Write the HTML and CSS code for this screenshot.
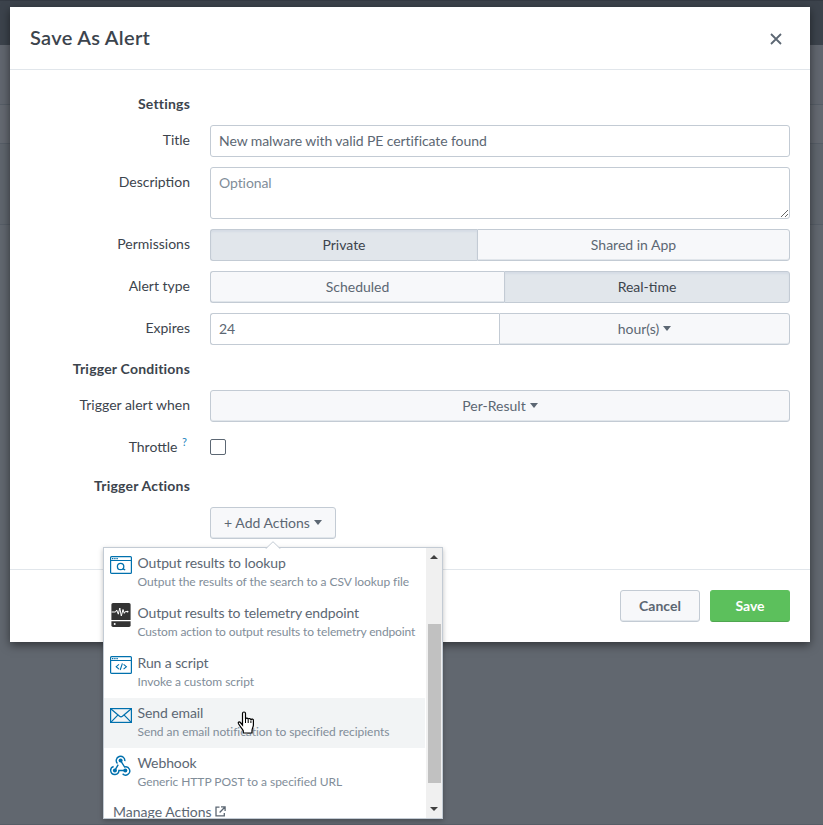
FILE: index.html
```html
<!DOCTYPE html>
<html lang="en">
<head>
  <meta charset="UTF-8">
  <title>Save As Alert</title>
  <link rel="stylesheet" href="styles.css">
</head>
<body>
  <div class="page-behind">
    <div class="nav-strip"></div>
    <div class="strip strip-title"></div>
    <div class="strip strip-search"></div>
    <div class="strip strip-tabs"></div>
    <div class="strip strip-rest"></div>
  </div>

  <div class="modal">
    <div class="modal-header">
      <h1>Save As Alert</h1>
      <button class="close" aria-label="Close">
        <svg width="12" height="12" viewBox="0 0 12 12"><path d="M1 1l10 10M11 1L1 11" stroke="#5c6773" stroke-width="1.8" fill="none"/></svg>
      </button>
    </div>

    <form class="modal-body">
      <h2>Settings</h2>
      <div class="row">
        <label>Title</label>
        <input class="control" type="text" value="New malware with valid PE certificate found">
      </div>
      <div class="row">
        <label>Description</label>
        <textarea class="control" placeholder="Optional"></textarea>
      </div>
      <div class="row">
        <label>Permissions</label>
        <div class="group permissions">
          <button type="button" class="btn active">Private</button>
          <button type="button" class="btn">Shared in App</button>
        </div>
      </div>
      <div class="row">
        <label>Alert type</label>
        <div class="group alert-type">
          <button type="button" class="btn">Scheduled</button>
          <button type="button" class="btn active">Real-time</button>
        </div>
      </div>
      <div class="row">
        <label>Expires</label>
        <div class="group expires">
          <input class="control" type="text" value="24">
          <button type="button" class="btn">hour(s)<span class="caret"></span></button>
        </div>
      </div>

      <h2>Trigger Conditions</h2>
      <div class="row">
        <label>Trigger alert when</label>
        <button type="button" class="btn">Per-Result<span class="caret"></span></button>
      </div>
      <div class="row">
        <label>Throttle <sup>?</sup></label>
        <span class="checkbox"></span>
      </div>

      <h2 class="actions-title">Trigger Actions</h2>
      <div class="row">
        <span></span>
        <div class="add-actions">
          <button type="button" class="btn">+ Add Actions<span class="caret"></span></button>
        </div>
      </div>
    </form>

    <div class="modal-footer">
      <button class="btn cancel">Cancel</button>
      <button class="btn save">Save</button>
    </div>
  </div>

  <div class="menu">
    <svg class="menu-arrow" width="16" height="8" viewBox="0 0 16 8"><path d="M0.5 8L8 0.7L15.5 8" fill="#fff" stroke="#c3cbd4"/></svg>
    <div class="menu-list">
      <div class="item">
        <svg width="22" height="22" viewBox="0 0 22 22" fill="none" stroke="#0070ad">
          <rect x=".6" y="3.6" width="20.8" height="16.8" rx="1" stroke-width="1.2"/>
          <path d="M1 7.500h20" stroke-width="1"/>
          <path d="M2 5.600h6" stroke-width="1.200" stroke-dasharray="1.400 .8"/>
          <circle cx="10.600" cy="13.500" r="3.200" stroke-width="1.300"/>
          <path d="M12.700 15.700l2.500 1.300" stroke-width="1.400"/>
        </svg>
        <div>
          <div class="name">Output results to lookup</div>
          <div class="desc">Output the results of the search to a CSV lookup file</div>
        </div>
      </div>
      <div class="item telemetry">
        <svg width="22" height="26" viewBox="0 0 22 26">
          <path d="M3 0h16a1.6 1.6 0 0 1 1.6 1.6V17H1.4V1.6A1.6 1.6 0 0 1 3 0z" fill="#333"/>
          <path d="M1.4 18.3h19.2v4a1.6 1.6 0 0 1-1.6 1.6H3a1.6 1.6 0 0 1-1.6-1.6z" fill="#333"/>
          <path d="M1.5 9h4l1.2-2 1.6 4.2L9.8 5l1.5 8 1.7-6.5 1.3 3.8 1-1.7H18" fill="none" stroke="#fff" stroke-width="1"/>
          <circle cx="17.6" cy="8.6" r=".9" fill="#fff"/>
          <circle cx="4.7" cy="21" r="1" fill="#fff"/>
        </svg>
        <div>
          <div class="name">Output results to telemetry endpoint</div>
          <div class="desc">Custom action to output results to telemetry endpoint</div>
        </div>
      </div>
      <div class="item">
        <svg width="22" height="22" viewBox="0 0 22 22" fill="none" stroke="#0070ad">
          <rect x=".6" y="3.6" width="20.8" height="16.8" rx="1" stroke-width="1.2"/>
          <path d="M1 7.500h20" stroke-width="1"/>
          <path d="M2 5.600h6" stroke-width="1.200" stroke-dasharray="1.400 .8"/>
          <path d="M9 11.300l-2.800 2.400L9 16.100M13.600 11.300l2.800 2.400-2.800 2.400M12.400 10.400l-2.200 6.600" stroke-width="1.100"/>
        </svg>
        <div>
          <div class="name">Run a script</div>
          <div class="desc">Invoke a custom script</div>
        </div>
      </div>
      <div class="item hover">
        <svg width="22" height="22" viewBox="0 0 22 22" fill="none" stroke="#0070ad">
          <rect x=".6" y="5.600" width="20.800" height="13.800" stroke-width="1.200"/>
          <path d="M1 6l8.600 7.300q1.400 1 2.800 0L21 6M1 19.200l6.800-7M21 19.200l-6.800-7" stroke-width="1.200"/>
        </svg>
        <div>
          <div class="name">Send email</div>
          <div class="desc">Send an email notification to specified recipients</div>
        </div>
      </div>
      <div class="item">
        <svg width="22" height="24" viewBox="0 -1 22 24" fill="none" stroke="#0070ad" stroke-width="1.4">
          <circle cx="10.6" cy="6.6" r="2" fill="#0070ad" stroke="none"/>
          <circle cx="4.9" cy="16.4" r="2" fill="#0070ad" stroke="none"/>
          <circle cx="15.3" cy="16.4" r="2" fill="#0070ad" stroke="none"/>
          <path d="M7.5 9.6a4.3 4.3 0 1 1 7.3-2.4M10.6 6.6l4 6.4a4.1 4.1 0 1 1-2 6.700"/>
          <path d="M3.6 12.5a4.1 4.1 0 1 0 5.3 4h6.4M4.9 16.4l3.3-5.8"/>
        </svg>
        <div>
          <div class="name">Webhook</div>
          <div class="desc">Generic HTTP POST to a specified URL</div>
        </div>
      </div>
      <div class="manage">Manage Actions
        <svg width="11" height="11" viewBox="0 0 11 11" fill="none" stroke="#5c6773" stroke-width="1.3"><path d="M4.5 1.2H1v8.6h8.3V7M6 .9h4.1V5M10 1L4.6 6.5"/></svg>
      </div>
    </div>
    <div class="scrollbar">
      <span class="up"></span>
      <span class="thumb"></span>
      <span class="down"></span>
    </div>
  </div>

  <svg class="cursor" width="18" height="24" viewBox="0 0 18 24">
    <path d="M5.5 14V2.5a1.5 1.5 0 0 1 3 0V8a1.4 1.4 0 0 1 2.7.4 1.4 1.4 0 0 1 2.7.6 1.3 1.3 0 0 1 2.5.8V14c0 2-1.4 3.5-1.4 5.500V22H6.300v-2.200C5 17.500 3.500 16 1.500 12.800c-.9-1.600.8-2.400 1.900-1.300z" fill="#fff" stroke="#000" stroke-width="1.2"/>
    <path d="M8.500 8v4M11.200 8.500V12M13.900 9.500V12" stroke="#000"/>
  </svg>
</body>
</html>
```

FILE: styles.css
```css
* {
  box-sizing: border-box;
}
body {
  margin: 0;
  height: 825px;
  position: relative;
  overflow: hidden;
  background: #61666f;
  font-family: Lato, "Liberation Sans", sans-serif;
  font-size: 14px;
  line-height: 20px;
  color: #3c444d;
}
button, input, textarea {
  font: inherit;
  letter-spacing: inherit;
  margin: 0;
}

/* dimmed page under the dialog */
.page-behind {
  position: absolute;
  inset: 0;
}
.nav-strip {
  height: 45px;
  background: #3c434c;
  border-top: 1px solid #343a43;
}
.strip {
  border-bottom: 1px solid #565d66;
  background: #61666f;
}
.strip-title { height: 60px; }
.strip-search { height: 39px; background: #646971; }
.strip-tabs { height: 81px; background: #5f656d; }
.strip-rest { height: 600px; background: #61676f; }

/* dialog */
.modal {
  position: relative;
  width: 800px;
  height: 635px;
  margin: 7px 0 0 10px;
  background: #fff;
  box-shadow: 0 3px 9px rgba(0, 0, 0, 0.5);
}
.modal-header {
  display: flex;
  justify-content: space-between;
  height: 63px;
  padding: 19px 28px 0 20px;
  border-bottom: 1px solid #e1e6eb;
}
h1 {
  margin: 0;
  font-size: 20px;
  line-height: 22px;
  font-weight: 600;
  letter-spacing: 0.3px;
}
.close {
  height: 12px;
  margin-top: 7px;
  padding: 0;
  border: 0;
  background: none;
  line-height: 0;
}
.modal-body {
  height: 499px;
  padding: 20px 20px 0;
}
h2 {
  width: 160px;
  margin: 14px 0 11px;
  font-size: 14px;
  line-height: 20px;
  font-weight: bold;
  letter-spacing: 0.2px;
  text-align: right;
}
h2:first-child {
  margin-top: 4px;
}
h2.actions-title {
  margin-top: 12px;
}
.row {
  display: grid;
  grid-template-columns: 160px 580px;
  column-gap: 20px;
  margin-bottom: 10px;
}
label {
  padding-top: 5px;
  text-align: right;
}
sup {
  margin: 0 3px 0 1px;
  font-size: 11px;
  line-height: 0;
  color: #1a84bd;
}
.control {
  width: 100%;
  height: 32px;
  padding: 4px 8px 6px;
  border: 1px solid #c3cbd4;
  border-radius: 3px;
  background: #fff;
  color: #5c6773;
  letter-spacing: -0.08px;
  outline: 0;
}
textarea.control {
  display: block;
  height: 52px;
  padding-top: 5px;
  resize: vertical;
}
.control::placeholder {
  color: #818d99;
}
.btn {
  display: flex;
  align-items: center;
  justify-content: center;
  height: 32px;
  padding: 0 14px 1px;
  border: 1px solid #c3cbd4;
  border-radius: 3px;
  background: #f7f8fa;
  box-shadow: inset 0 -1px 0 #e1e6eb;
  color: #5c6773;
}
.btn.active {
  background: #e1e6eb;
  box-shadow: inset 0 2px 2px #d5dce5;
  color: #3c444d;
}
.group {
  display: grid;
}
.group > :first-child {
  border-right: 0;
  border-radius: 3px 0 0 3px;
}
.group > :last-child {
  border-radius: 0 3px 3px 0;
}
.permissions { grid-template-columns: 267px 1fr; }
.alert-type { grid-template-columns: 294px 1fr; }
.expires { grid-template-columns: 289px 1fr; }
.caret {
  margin-left: 4px;
  border: 4px solid transparent;
  border-top: 5px solid #5c6773;
  border-bottom: 0;
}
.checkbox {
  width: 16px;
  height: 16px;
  margin: 7px 0 9px;
  border: 1px solid #5c6773;
  border-radius: 2px;
}
.add-actions .btn {
  width: 126px;
  padding: 0 0 1px;
}
.modal-footer {
  display: flex;
  justify-content: flex-end;
  gap: 10px;
  padding: 20px;
  border-top: 1px solid #e1e6eb;
}
.modal-footer .btn {
  width: 80px;
  font-weight: bold;
}
.modal-footer .save {
  border-color: #5cc05c;
  border-bottom-color: #4fa650;
  background: #5cc05c;
  box-shadow: none;
  color: #fff;
}

/* add actions menu */
.menu {
  position: absolute;
  left: 103px;
  top: 547px;
  display: flex;
  width: 340px;
  height: 272px;
  border: 1px solid #c3cbd4;
  background: #fff;
  box-shadow: 0 2px 5px rgba(0, 0, 0, 0.25);
}
.menu-arrow {
  position: absolute;
  left: 161px;
  top: -7px;
}
.menu-list {
  width: 322px;
  overflow: hidden;
}
.item {
  display: flex;
  gap: 5.5px;
  width: 321px;
  height: 50px;
  padding: 5px 0 0 6px;
}
.item svg {
  flex: none;
}
.item.hover {
  background: #f2f4f5;
}
.name {
  color: #5c6773;
  letter-spacing: -0.1px;
}
.desc {
  font-size: 12px;
  line-height: 18px;
  color: #818d99;
  white-space: nowrap;
  letter-spacing: -0.05px;
}
.telemetry .name, .telemetry .desc {
  letter-spacing: -0.13px;
}
.manage {
  padding: 4px 0 0 9px;
  color: #5c6773;
}
.scrollbar {
  display: flex;
  flex-direction: column;
  align-items: center;
  width: 16px;
  background: #f0f0f0;
}
.up, .down {
  border: 4px solid transparent;
}
.up {
  margin-top: 7px;
  border-top: 0;
  border-bottom-color: #404040;
}
.thumb {
  width: 13px;
  height: 159px;
  margin: 65px 0 24px;
  background: #c1c1c1;
}
.down {
  border-bottom: 0;
  border-top-color: #404040;
}
.cursor {
  position: absolute;
  left: 237px;
  top: 711px;
}
```
